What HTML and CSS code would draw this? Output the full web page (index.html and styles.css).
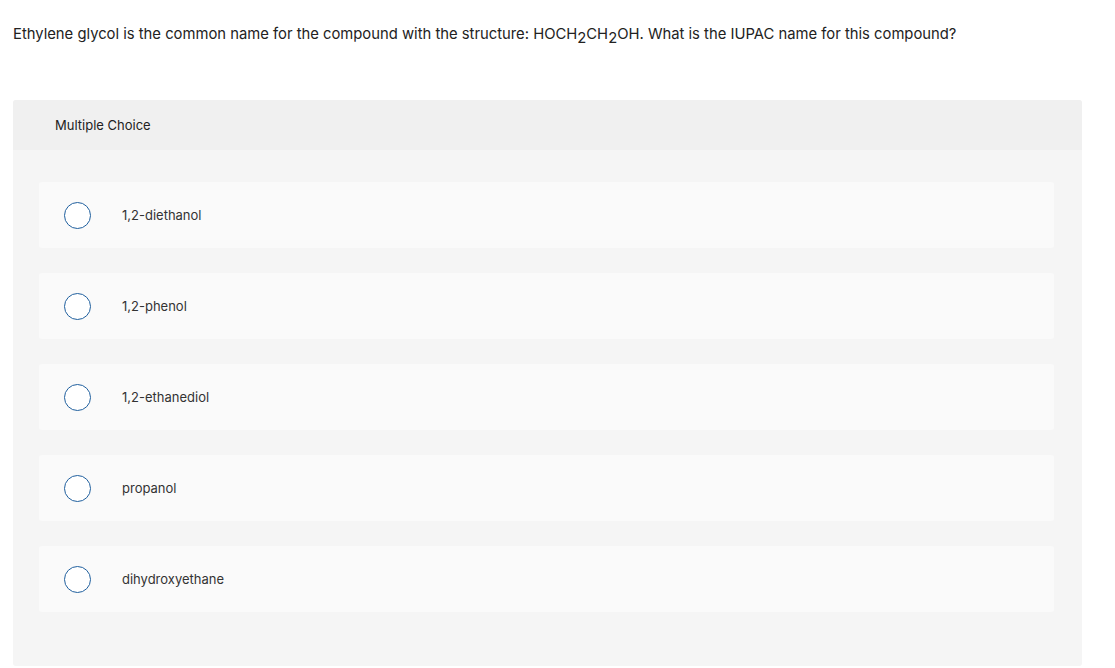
FILE: index.html
```html
<!DOCTYPE html>
<html lang="en">
<head>
<meta charset="utf-8">
<title>Multiple Choice</title>
<link rel="stylesheet" href="styles.css">
</head>
<body>
<div class="page">
  <p class="question">Ethylene glycol is the common name for the compound with the structure: HOCH<sub>2</sub>CH<sub>2</sub>OH. What is the IUPAC name for this compound?</p>
  <section class="panel">
    <div class="panel-head">Multiple Choice</div>
    <div class="options">
      <label class="option"><span class="radio"></span><span class="opt-text">1,2-diethanol</span></label>
      <label class="option"><span class="radio"></span><span class="opt-text">1,2-phenol</span></label>
      <label class="option"><span class="radio"></span><span class="opt-text">1,2-ethanediol</span></label>
      <label class="option"><span class="radio"></span><span class="opt-text">propanol</span></label>
      <label class="option"><span class="radio"></span><span class="opt-text">dihydroxyethane</span></label>
    </div>
  </section>
</div>
</body>
</html>
```

FILE: styles.css
```css
html, body {
  margin: 0;
  padding: 0;
  background: #ffffff;
}
body {
  font-family: "Inter", "Liberation Sans", sans-serif;
  color: #222222;
}
.page {
  padding: 0 33px 0 13px;
}
.question {
  margin: 0;
  padding-top: 24px;
  height: 100px;
  box-sizing: border-box;
  font-size: 14.8px;
  line-height: 20px;
  color: #222;
  white-space: nowrap;
}
.question sub {
  font-size: 14.8px;
  vertical-align: -4px;
  line-height: 0;
}
.panel {
  background: #f5f5f5;
  border-radius: 3px;
  overflow: hidden;
  padding-bottom: 54px;
}
.panel-head {
  background: #f0f0f0;
  height: 50px;
  display: flex;
  align-items: center;
  padding-left: 42px;
  font-size: 13px;
  color: #222;
}
.options {
  display: flex;
  flex-direction: column;
  gap: 25px;
  padding: 32px 28px 0 26px;
}
.option {
  display: flex;
  align-items: center;
  height: 66px;
  background: #fafafa;
  border-radius: 3px;
  padding-left: 25px;
}
.radio {
  width: 25px;
  height: 25px;
  border: 1.5px solid #1f5f9e;
  border-radius: 50%;
  background: #fff;
  flex: none;
}
.opt-text {
  margin-left: 31px;
  font-size: 13px;
  color: #333;
}
```
